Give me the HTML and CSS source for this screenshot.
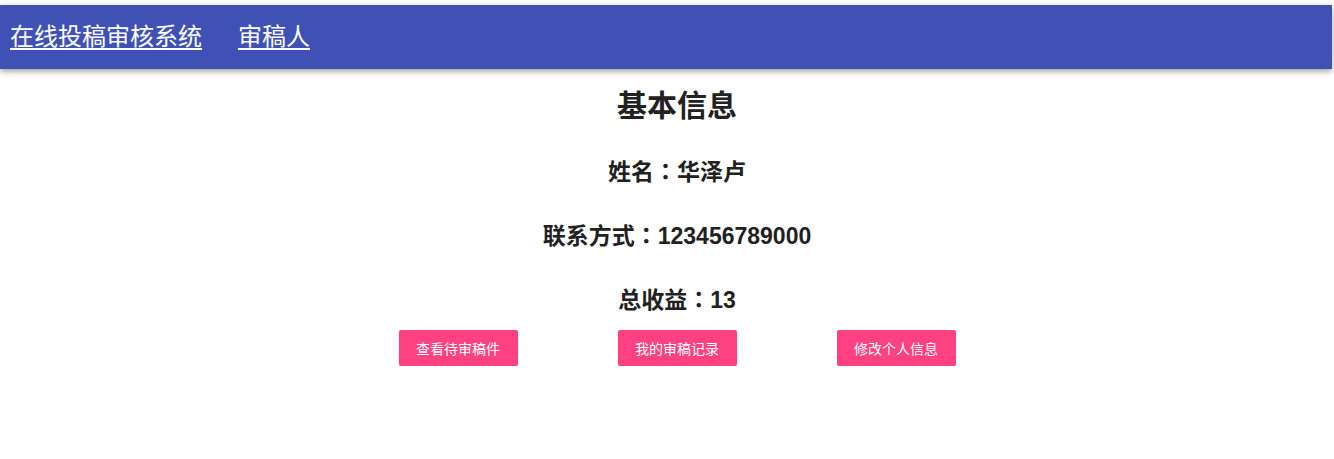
FILE: index.html
```html
<!DOCTYPE html>
<html lang="zh-CN">
<head>
<meta charset="utf-8">
<title>在线投稿审核系统</title>
<link rel="stylesheet" href="styles.css">
</head>
<body>
<header class="toolbar">
  <a class="toolbar-link" href="#">在线投稿审核系统</a>
  <a class="toolbar-link" href="#">审稿人</a>
</header>
<main class="content">
  <h1 class="title">基本信息</h1>
  <h2 class="info">姓名<span class="colon" lang="zh-TW">：</span>华泽卢</h2>
  <h2 class="info">联系方式<span class="colon" lang="zh-TW">：</span>123456789000</h2>
  <h2 class="info">总收益<span class="colon" lang="zh-TW">：</span>13</h2>
  <div class="actions">
    <button class="btn">查看待审稿件</button>
    <button class="btn">我的审稿记录</button>
    <button class="btn">修改个人信息</button>
  </div>
</main>
</body>
</html>
```
FILE: styles.css
```css
html, body {
  margin: 0;
  padding: 0;
  background: #ffffff;
}
body {
  font-family: "Liberation Sans", "Noto Sans CJK SC", sans-serif;
  color: #212121;
}
.toolbar {
  margin-top: 5px;
  width: 1332px;
  height: 64px;
  background: #3f51b5;
  display: flex;
  align-items: center;
  gap: 36px;
  padding-left: 10px;
  box-sizing: border-box;
  box-shadow: 0 2px 4px -1px rgba(0,0,0,.2), 0 4px 5px 0 rgba(0,0,0,.14), 0 1px 10px 0 rgba(0,0,0,.12);
}
.toolbar-link {
  color: #ffffff;
  font-size: 24px;
  line-height: 32px;
  text-decoration: underline;
  text-underline-offset: 3px;
  text-decoration-thickness: 2px;
}
.content {
  padding-left: 20px;
  display: flex;
  flex-direction: column;
  align-items: center;
  text-align: center;
}
.title {
  margin: 17px 0 0;
  font-size: 30px;
  line-height: 40px;
  font-weight: bold;
}
.info {
  margin: 0;
  font-size: 23px;
  line-height: 30px;
  font-weight: bold;
}
.colon {
  font-family: "Noto Sans CJK TC", "Noto Sans CJK SC", sans-serif;
  line-height: 1;
}
.title + .info {
  margin-top: 31px;
}
.info + .info {
  margin-top: 34px;
}
.actions {
  margin-top: 15px;
  display: flex;
  justify-content: center;
  gap: 100px;
}
.btn {
  width: 119px;
  height: 36px;
  border: none;
  border-radius: 2px;
  background: #ff4081;
  color: #ffffff;
  font-family: "Liberation Sans", "Noto Sans CJK SC", sans-serif;
  font-size: 14px;
  padding: 0;
  box-shadow: 0 1px 2px rgba(0,0,0,.12);
}
```
